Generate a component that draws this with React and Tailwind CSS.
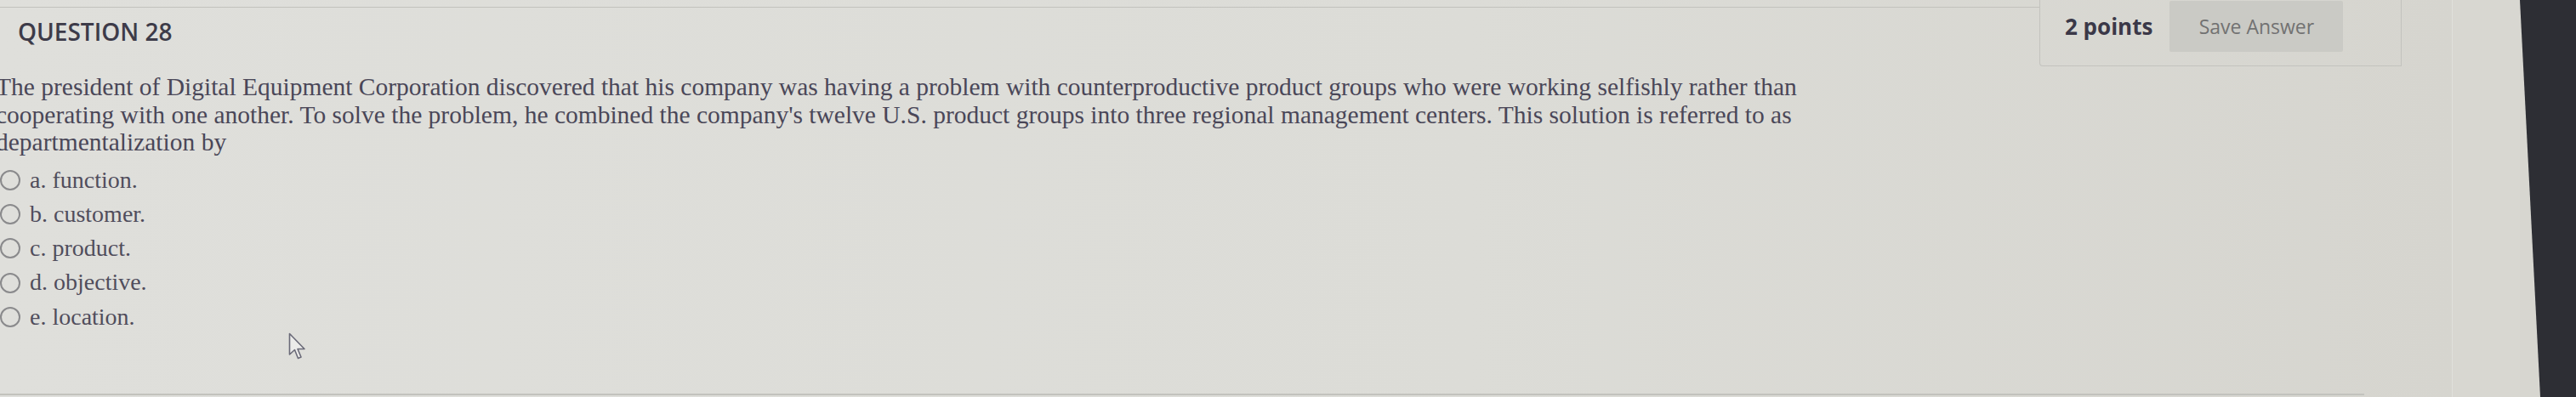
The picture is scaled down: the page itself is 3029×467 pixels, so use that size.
import React from "react";

const serif = "font-['Liberation_Serif','Times_New_Roman',serif]";
const sans = "font-['Open_Sans','Noto_Sans',sans-serif]";

const options = ["a. function.", "b. customer.", "c. product.", "d. objective.", "e. location."];

export default function App() {
  return (
    <div className="relative w-[3029px] h-[467px] overflow-hidden bg-[#d7d6d0] flex">
      {/* main page content */}
      <div className="w-[2883px] h-full flex flex-col bg-[linear-gradient(to_right,#dfdfdb,#dcdcd7_60%,#d6d5cf)]">
        {/* header */}
        <div className="flex items-start">
          <div className="flex-1 pt-[8px]">
            <div className="border-t border-[#c2c2bd] pt-[9px] pl-[21px]">
              <h1 className={`${sans} text-[28px] leading-[38px] font-semibold text-[#3d3b49]`}>QUESTION 28</h1>
            </div>
          </div>
          <div className="w-[426px] h-[78px] mr-[59px] border-l border-r border-b border-[#c3c3be] rounded-bl-[4px] pl-[29px] pt-[1px]">
            <div className="flex items-center h-[60px] gap-[20px]">
              <span className={`${sans} text-[26px] font-bold text-[#3b3848] leading-[60px]`}>2 points</span>
              <button className={`${sans} w-[204px] h-[60px] bg-[#cacac5] text-[23px] text-[#727272] rounded-[2px]`}>
                Save Answer
              </button>
            </div>
          </div>
        </div>

        {/* question body */}
        <div className={`${serif} ml-[-5px] mt-[8px] text-[29.5px] leading-[32.5px] text-[#4a4758]`}>
          <p className="whitespace-nowrap">
            The president of Digital Equipment Corporation discovered that his company was having a problem with counterproductive product groups who were working selfishly rather than
          </p>
          <p className="whitespace-nowrap">
            cooperating with one another. To solve the problem, he combined the company's twelve U.S. product groups into three regional management centers. This solution is referred to as
          </p>
          <p className="whitespace-nowrap">departmentalization by</p>
        </div>

        {/* options */}
        <ul className={`${serif} mt-[8px] text-[28px] leading-[40.3px] text-[#504d5c]`}>
          {options.map((o) => (
            <li key={o} className="flex items-center gap-[11px]">
              <span className="w-[24px] h-[24px] rounded-full border-2 border-[#8a8a8c] shrink-0" />
              <span>{o}</span>
            </li>
          ))}
        </ul>

        <div className="mt-auto mb-[2px] w-[2780px] h-[2px] bg-[#c2c2bd]" />
      </div>

      {/* light edge strip */}
      <div className="w-[80px] h-full border-l border-[#e0e0dc] bg-[#d8d7d1]" />

      {/* dark bezel */}
      <div className="flex-1 h-full bg-[#2d2e34] [clip-path:polygon(0_0,100%_0,100%_100%,24px_100%)]" />

      {/* mouse cursor */}
      <svg className="absolute left-[339px] top-[391px]" width="21" height="33" viewBox="0 0 21 33">
        <path
          d="M1.5 1.5 L1.5 26 L7.5 20.5 L11.5 30.5 L15 29 L11 19.5 L19 19.5 Z"
          fill="#ececea"
          stroke="#6a6a78"
          strokeWidth="1.6"
          strokeLinejoin="round"
        />
      </svg>
    </div>
  );
}
